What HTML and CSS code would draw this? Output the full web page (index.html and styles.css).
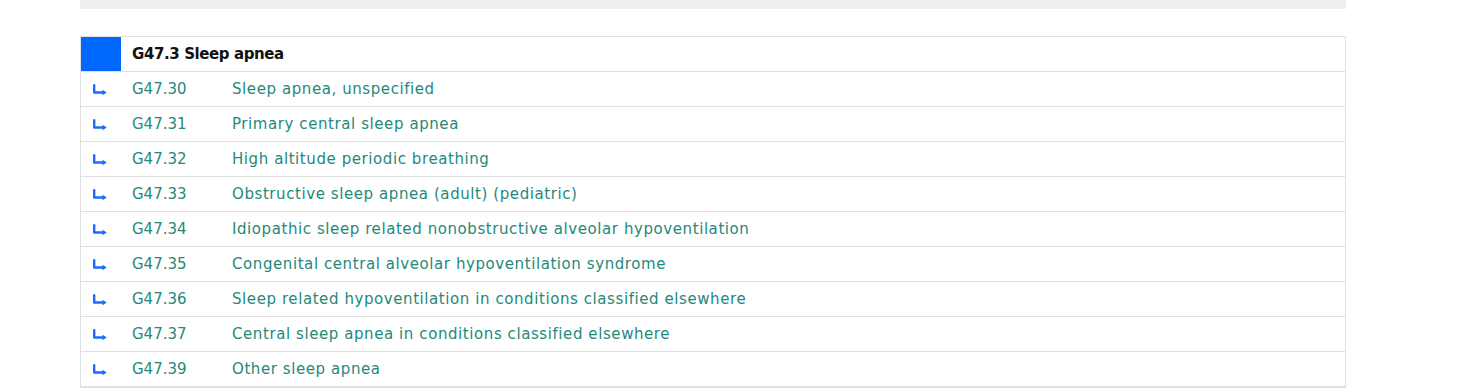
FILE: index.html
```html
<!DOCTYPE html>
<html>
<head>
<meta charset="utf-8">
<link rel="stylesheet" href="styles.css">
</head>
<body>
<div class="page">
  <div class="topbar"></div>
  <table class="codes">
    <tr class="head">
      <td class="mark"><span class="blue"></span></td>
      <td colspan="2" class="title">G47.3 Sleep apnea</td>
    </tr>
    <tr><td class="ico"><svg viewBox="0 0 16 12" width="16" height="12"><path d="M2.2 1.2v7.3h9" fill="none" stroke="#1a6ef5" stroke-width="2.4" stroke-linecap="round" stroke-linejoin="round"/><path d="M10.5 5.8l4.3 2.7-4.3 2.7z" fill="#1a6ef5"/></svg></td><td class="code">G47.30</td><td class="desc">Sleep apnea, unspecified</td></tr>
    <tr><td class="ico"><svg viewBox="0 0 16 12" width="16" height="12"><path d="M2.2 1.2v7.3h9" fill="none" stroke="#1a6ef5" stroke-width="2.4" stroke-linecap="round" stroke-linejoin="round"/><path d="M10.5 5.8l4.3 2.7-4.3 2.7z" fill="#1a6ef5"/></svg></td><td class="code">G47.31</td><td class="desc">Primary central sleep apnea</td></tr>
    <tr><td class="ico"><svg viewBox="0 0 16 12" width="16" height="12"><path d="M2.2 1.2v7.3h9" fill="none" stroke="#1a6ef5" stroke-width="2.4" stroke-linecap="round" stroke-linejoin="round"/><path d="M10.5 5.8l4.3 2.7-4.3 2.7z" fill="#1a6ef5"/></svg></td><td class="code">G47.32</td><td class="desc">High altitude periodic breathing</td></tr>
    <tr><td class="ico"><svg viewBox="0 0 16 12" width="16" height="12"><path d="M2.2 1.2v7.3h9" fill="none" stroke="#1a6ef5" stroke-width="2.4" stroke-linecap="round" stroke-linejoin="round"/><path d="M10.5 5.8l4.3 2.7-4.3 2.7z" fill="#1a6ef5"/></svg></td><td class="code">G47.33</td><td class="desc">Obstructive sleep apnea (adult) (pediatric)</td></tr>
    <tr><td class="ico"><svg viewBox="0 0 16 12" width="16" height="12"><path d="M2.2 1.2v7.3h9" fill="none" stroke="#1a6ef5" stroke-width="2.4" stroke-linecap="round" stroke-linejoin="round"/><path d="M10.5 5.8l4.3 2.7-4.3 2.7z" fill="#1a6ef5"/></svg></td><td class="code">G47.34</td><td class="desc">Idiopathic sleep related nonobstructive alveolar hypoventilation</td></tr>
    <tr><td class="ico"><svg viewBox="0 0 16 12" width="16" height="12"><path d="M2.2 1.2v7.3h9" fill="none" stroke="#1a6ef5" stroke-width="2.4" stroke-linecap="round" stroke-linejoin="round"/><path d="M10.5 5.8l4.3 2.7-4.3 2.7z" fill="#1a6ef5"/></svg></td><td class="code">G47.35</td><td class="desc">Congenital central alveolar hypoventilation syndrome</td></tr>
    <tr><td class="ico"><svg viewBox="0 0 16 12" width="16" height="12"><path d="M2.2 1.2v7.3h9" fill="none" stroke="#1a6ef5" stroke-width="2.4" stroke-linecap="round" stroke-linejoin="round"/><path d="M10.5 5.8l4.3 2.7-4.3 2.7z" fill="#1a6ef5"/></svg></td><td class="code">G47.36</td><td class="desc">Sleep related hypoventilation in conditions classified elsewhere</td></tr>
    <tr><td class="ico"><svg viewBox="0 0 16 12" width="16" height="12"><path d="M2.2 1.2v7.3h9" fill="none" stroke="#1a6ef5" stroke-width="2.4" stroke-linecap="round" stroke-linejoin="round"/><path d="M10.5 5.8l4.3 2.7-4.3 2.7z" fill="#1a6ef5"/></svg></td><td class="code">G47.37</td><td class="desc">Central sleep apnea in conditions classified elsewhere</td></tr>
    <tr><td class="ico"><svg viewBox="0 0 16 12" width="16" height="12"><path d="M2.2 1.2v7.3h9" fill="none" stroke="#1a6ef5" stroke-width="2.4" stroke-linecap="round" stroke-linejoin="round"/><path d="M10.5 5.8l4.3 2.7-4.3 2.7z" fill="#1a6ef5"/></svg></td><td class="code">G47.39</td><td class="desc">Other sleep apnea</td></tr>
  </table>
</div>
</body>
</html>
```

FILE: styles.css
```css
html, body {
  margin: 0;
  padding: 0;
  background: #fff;
}
body {
  font-family: "DejaVu Sans", "Open Sans", sans-serif;
}
.page {
  width: 1266px;
  margin-left: 80px;
}
.topbar {
  height: 9px;
  background: #efefef;
}
.codes {
  margin-top: 27px;
  width: 1266px;
  border-collapse: collapse;
  border: 1px solid #e0e0e0;
  border-bottom: 2px solid #e0e0e0;
}
.codes tr {
  height: 35px;
}
.codes td {
  padding: 0;
  border-bottom: 1px solid #e0e0e0;
  vertical-align: middle;
  font-size: 15px;
  line-height: 18px;
  color: #23897b;
}
.codes td.mark {
  width: 40px;
  padding: 0;
  vertical-align: top;
}
.blue {
  display: block;
  width: 40px;
  height: 34px;
  background: #0068ff;
}
.codes td.title {
  padding-left: 11px;
  font-weight: 700;
  color: #111;
  letter-spacing: -0.4px;
}
.codes td.ico {
  width: 40px;
}
.ico svg {
  display: block;
  margin: 2px 0 0 11px;
}
.codes td.code {
  width: 89px;
  padding-left: 11px;
}
.codes td.desc {
  padding-left: 11px;
  letter-spacing: 0.58px;
}
```
